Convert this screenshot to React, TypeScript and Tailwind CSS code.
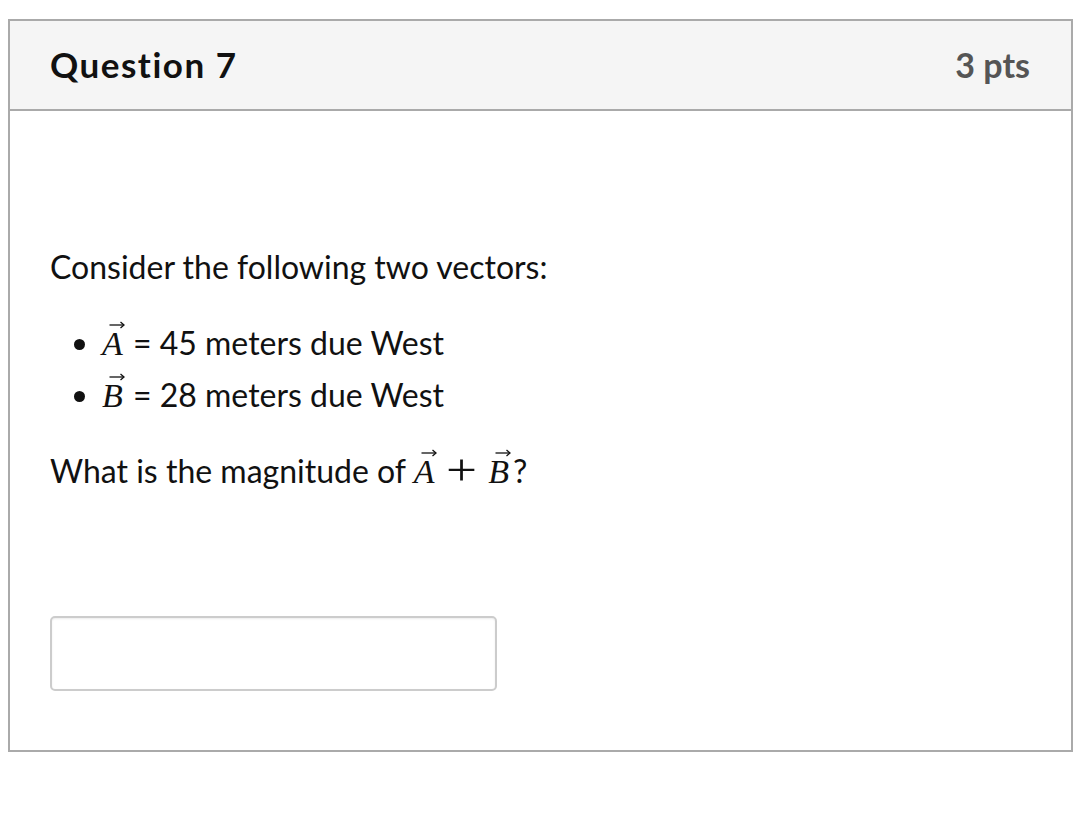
import React from "react";

const serif = '"Liberation Serif", "DejaVu Serif", serif';

function Vec({ letter }: { letter: string }) {
  return (
    <span className="relative mr-[2px] inline-block leading-none">
      <span className="italic text-[34px] leading-none" style={{ fontFamily: serif }}>
        {letter}
      </span>
      <svg
        className="absolute left-[7px] top-[-6px]"
        width="16"
        height="8"
        viewBox="0 0 16 8"
        fill="none"
        stroke="#111"
        strokeWidth="1.3"
      >
        <path d="M0.5 4H14.5" />
        <path d="M11.5 1L15 4L11.5 7" />
      </svg>
    </span>
  );
}

export default function App() {
  return (
    <div className="min-h-[826px] w-[1074px] bg-white pt-[19px]" style={{ fontFamily: 'Lato, "Noto Sans", sans-serif' }}>
      <div className="ml-[8px] w-[1065px] border-2 border-[#aaaaaa]">
        <div className="flex h-[90px] items-center justify-between border-b-2 border-[#aaaaaa] bg-[#f5f5f5] pb-[2px] pl-[40px] pr-[41px]">
          <h2 className="text-[35px] font-bold tracking-[1.5px] text-[#111]">Question 7</h2>
          <span className="text-[34px] font-bold text-[#555]">3 pts</span>
        </div>
        <div className="flex h-[639px] flex-col px-[40px] text-[32px] text-[#111]">
          <p className="mt-[132px] leading-[48px]">Consider the following two vectors:</p>
          <ul className="mt-[26px] list-disc pl-[52px]">
            <li className="leading-[52px]">
              <Vec letter="A" /> = 45 meters due West
            </li>
            <li className="leading-[52px]">
              <Vec letter="B" /> = 28 meters due West
            </li>
          </ul>
          <p className="mt-[26px] leading-[48px]">
            What is the magnitude of <Vec letter="A" />
            <span
              className="ml-[13px] mr-[14px] inline-block h-[34px] translate-y-[2px] scale-x-[1.25] text-[44px] leading-[34px]"
              style={{ fontFamily: serif }}
            >
              +
            </span>
            <Vec letter="B" />
            <span className="ml-[2px]">?</span>
          </p>
          <input
            type="text"
            className="mt-[121px] h-[75px] w-[447px] rounded-[5px] border-2 border-[#cccccc] bg-white shadow-[inset_0_1px_2px_rgba(0,0,0,0.08)] outline-none"
          />
        </div>
      </div>
    </div>
  );
}
